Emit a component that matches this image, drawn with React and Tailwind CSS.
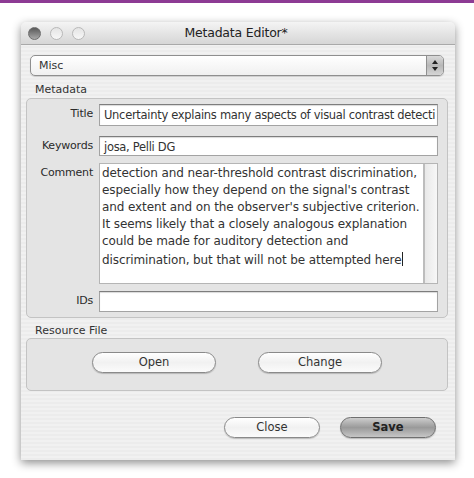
import React from "react";

const font = { fontFamily: '"DejaVu Sans", "Liberation Sans", sans-serif' };

function Field({ label, children, className = "" }) {
  return (
    <div className={`flex items-start ${className}`}>
      <div className="w-[67px] shrink-0 pr-[1px] pt-[2px] text-right text-[11px] leading-[15px] tracking-[-0.2px] text-[#2a2a2a]">
        {label}
      </div>
      <div className="ml-[5px] w-[339px]">{children}</div>
    </div>
  );
}

function TextBox({ value, h = "h-[21px]" }) {
  return (
    <div
      className={`${h} overflow-hidden whitespace-nowrap border border-[#a3a3a3] border-t-[#7d7d7d] bg-white px-[4px] pt-[2px] text-[11.5px] leading-[16px] tracking-[-0.3px] text-[#333] shadow-[inset_0_1px_1px_rgba(0,0,0,0.15)]`}
    >
      {value}
    </div>
  );
}

function Pill({ children, wide, primary }) {
  return (
    <button
      className={`${wide ? "w-[124px]" : "w-[96px]"} h-[21px] rounded-full border text-[11.5px] leading-[15px] ${
        primary
          ? "border-[#6f6f6f] bg-gradient-to-b from-[#cdcdcd] via-[#9a9a9a] to-[#c6c6c6] font-bold text-[#222]"
          : "border-[#8a8a8a] bg-gradient-to-b from-white via-[#f1f1f1] to-[#fbfbfb] text-[#333]"
      } shadow-[0_1px_1px_rgba(0,0,0,0.2)]`}
    >
      {children}
    </button>
  );
}

const lines = [
  "detection and near-threshold contrast discrimination,",
  "especially how they depend on the signal's contrast",
  "and extent and on the observer's subjective criterion.",
  "It seems likely that a closely analogous explanation",
  "could be made for auditory detection and",
];

export default function App() {
  return (
    <div className="h-[478px] w-[474px] overflow-hidden bg-white" style={font}>
      <div className="h-[3px] bg-[#8d3b94]" />
      <div className="ml-[21px] mt-[19px] flex h-[438px] w-[434px] flex-col rounded-t-[5px] bg-[#ededed] shadow-[0_3px_10px_rgba(0,0,0,0.45)]">
        {/* title bar */}
        <div className="flex h-[23px] shrink-0 items-center rounded-t-[5px] border-b border-[#a9a9a9] bg-gradient-to-b from-[#f4f4f4] to-[#d6d6d6]">
          <div className="ml-[7px] flex w-[60px] gap-[9px]">
            <div className="h-[13px] w-[13px] rounded-full border border-[#6d6d6d] bg-gradient-to-b from-[#5a5a5a] to-[#a9a9a9]" />
            <div className="h-[13px] w-[13px] rounded-full border border-[#b8b8b8] bg-gradient-to-b from-[#e4e4e4] to-[#f7f7f7]" />
            <div className="h-[13px] w-[13px] rounded-full border border-[#b8b8b8] bg-gradient-to-b from-[#e4e4e4] to-[#f7f7f7]" />
          </div>
          <div className="flex-1 pr-[71px] text-center text-[12.5px] leading-[16px] tracking-[-0.2px] text-[#222]">
            Metadata Editor*
          </div>
        </div>

        {/* body */}
        <div className="flex-1 bg-[repeating-linear-gradient(0deg,#ececec_0px,#ececec_2px,#f1f1f1_2px,#f1f1f1_4px)]">
          {/* popup */}
          <div className="ml-[9px] mt-[10px] flex h-[21px] w-[414px] overflow-hidden rounded-[5px] border border-[#8f8f8f] bg-gradient-to-b from-white to-[#f0f0f0] shadow-[0_1px_1px_rgba(0,0,0,0.15)]">
            <div className="flex-1 pl-[8px] pt-[2px] text-[11px] leading-[15px] text-[#333]">Misc</div>
            <div className="flex w-[17px] flex-col items-center justify-center gap-[3px] border-l border-[#8f8f8f] bg-gradient-to-b from-[#d9d9d9] via-[#b8b8b8] to-[#d5d5d5]">
              <div className="h-0 w-0 border-x-[3px] border-b-[4px] border-x-transparent border-b-[#222]" />
              <div className="h-0 w-0 border-x-[3px] border-t-[4px] border-x-transparent border-t-[#222]" />
            </div>
          </div>

          <div className="ml-[14px] mt-[6px] text-[11px] leading-[15px] text-[#333]">Metadata</div>
          <div className="ml-[5px] mt-[1px] h-[220px] w-[422px] rounded-[5px] border border-[#c3c3c3] bg-[#e4e4e4] pt-[5px]">
            <Field label="Title">
              <TextBox value="Uncertainty explains many aspects of visual contrast detecti" h="h-[22px]" />
            </Field>
            <Field label="Keywords" className="mt-[10px]">
              <TextBox value="josa, Pelli DG" h="h-[20px]" />
            </Field>
            <Field label="Comment" className="mt-[7px]">
              <div className="flex h-[121px] border border-[#b5b5b5] bg-white">
                <div className="flex-1 overflow-hidden whitespace-nowrap pl-[2px] pt-[1px] text-[12px] leading-[17px] tracking-[-0.1px] text-[#333]">
                  {lines.map((l) => (
                    <div key={l}>{l}</div>
                  ))}
                  <div>
                    discrimination, but that will not be attempted here
                    <span className="ml-[1px] inline-block h-[14px] w-[1px] translate-y-[2px] bg-[#222]" />
                  </div>
                </div>
                <div className="w-[14px] border-l-2 border-[#bdbdbd] bg-gradient-to-r from-[#e9e9e9] to-[#f7f7f7]" />
              </div>
            </Field>
            <Field label="IDs" className="mt-[7px]">
              <TextBox value="" h="h-[21px]" />
            </Field>
          </div>

          <div className="ml-[14px] mt-[5px] text-[11px] leading-[15px] text-[#333]">Resource File</div>
          <div className="ml-[5px] flex h-[53px] w-[422px] items-start gap-[42px] rounded-[5px] border border-[#c3c3c3] bg-[#e4e4e4] pl-[65px] pt-[13px]">
            <Pill wide>Open</Pill>
            <Pill wide>Change</Pill>
          </div>

          <div className="mr-[19px] mt-[26px] flex justify-end gap-[20px]">
            <Pill>Close</Pill>
            <Pill primary>Save</Pill>
          </div>
        </div>
      </div>
    </div>
  );
}
